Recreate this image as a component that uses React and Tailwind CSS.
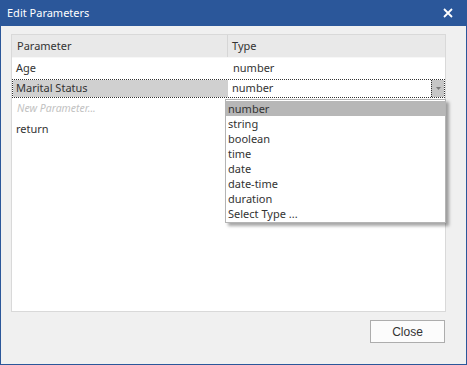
import React from 'react';

const types = ['number', 'string', 'boolean', 'time', 'date', 'date-time', 'duration', 'Select Type ...'];

export default function App() {
  return (
    <div className="relative w-[467px] h-[365px] bg-[#f0f0f0] border-x border-b border-[#2b579a] flex flex-col text-[11px] text-[#333] font-['Segoe_UI','Noto_Sans',sans-serif]">
      {/* title bar */}
      <div className="h-[26px] bg-[#2b579a] text-white flex items-center justify-between pl-[6px] pr-[13px]">
        <span className="text-[11px]">Edit Parameters</span>
        <svg width="10" height="10" viewBox="0 0 10 10">
          <path d="M1 1 L9 9 M9 1 L1 9" stroke="white" strokeWidth="1.8" />
        </svg>
      </div>

      {/* parameter grid */}
      <div className="ml-[10px] mr-[20px] mt-[8px] h-[278px] border border-[#d9d9d9] bg-white">
        <div className="flex h-[23px] bg-[#e9e9e9] border-b border-[#f7f7f7]">
          <div className="w-[216px] border-r border-[#d6d6d6] pl-[5px] flex items-center">Parameter</div>
          <div className="flex-1 pl-[4px] flex items-center">Type</div>
        </div>
        <div className="flex h-[21px] items-center">
          <div className="w-[216px] pl-[4px]">Age</div>
          <div className="flex-1 pl-[5px]">number</div>
        </div>
        <div className="flex h-[19px] border border-dotted border-[#333]">
          <div className="w-[215px] bg-[#d0d0d0] pl-[3px] flex items-center">Marital Status</div>
          <div className="flex-1 bg-white pl-[4px] flex items-center">number</div>
          <div className="w-[13px] bg-[#c6c6c6] border-l border-dotted border-[#333] flex items-center justify-center">
            <svg width="5" height="3" viewBox="0 0 5 3">
              <path d="M0 0 H5 L2.5 3 Z" fill="#777" />
            </svg>
          </div>
        </div>
        <div className="flex h-[21px] items-center">
          <div className="w-[216px] pl-[5px] italic text-[#c2c2c2] text-[10.5px]">New Parameter...</div>
        </div>
        <div className="flex h-[20px] items-center">
          <div className="w-[216px] pl-[4px]">return</div>
        </div>
      </div>

      {/* footer */}
      <div className="flex justify-end mr-[21px] mt-[8px]">
        <button className="w-[75px] h-[23px] bg-[#fcfcfc] border border-[#adadad] text-[12px] text-[#333] font-['Liberation_Sans',sans-serif]">
          Close
        </button>
      </div>

      {/* dropdown list */}
      <div className="absolute left-[224px] top-[99px] w-[221px] bg-white border border-[#b4b4b4] shadow-[3px_3px_3px_rgba(0,0,0,0.35)] py-[1px]">
        {types.map((t, i) => (
          <div
            key={t}
            className={i === 0 ? 'h-[15px] leading-[15px] pl-[2px] bg-[#b7b7b7]' : 'h-[15px] leading-[15px] pl-[2px]'}
          >
            {t}
          </div>
        ))}
      </div>
    </div>
  );
}
